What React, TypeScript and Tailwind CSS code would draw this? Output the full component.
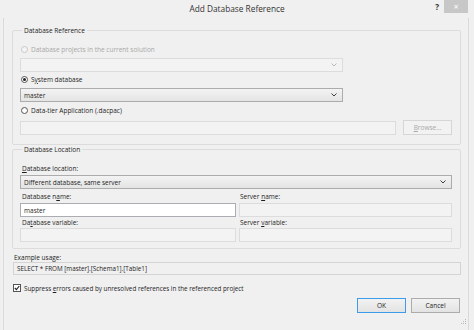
import type { ReactNode } from "react";

const font = { fontFamily: '"Open Sans", "Noto Sans", sans-serif' };

function Chevron({ disabled }: { disabled?: boolean }) {
  return (
    <svg width="6" height="4" viewBox="0 0 6 4" className="shrink-0">
      <path d="M0.5 0.5 L3 3 L5.5 0.5" fill="none" stroke={disabled ? "#b8b8b8" : "#404040"} strokeWidth="1" />
    </svg>
  );
}

function Combo({ text, width, disabled }: { text?: string; width: string; disabled?: boolean }) {
  return (
    <div
      className={`flex h-[14px] items-center justify-between border pl-[3px] pr-[5px] ${width} ${
        disabled
          ? "border-[#dcdcdc] bg-[#f3f3f3]"
          : "border-[#acacac] bg-gradient-to-b from-[#f3f3f3] to-[#e4e4e4]"
      }`}
    >
      <span className="text-[6.5px] leading-[9px] text-[#1e1e1e]">{text}</span>
      <Chevron disabled={disabled} />
    </div>
  );
}

function Field({ text, width, white }: { text?: string; width: string; white?: boolean }) {
  return (
    <div
      className={`flex h-[14px] items-center border pl-[3px] ${width} ${
        white ? "border-[#abadb3] bg-white" : "border-[#dcdcdc] bg-[#f3f3f3]"
      }`}
    >
      <span className="text-[6.5px] leading-[9px] text-[#1e1e1e]">{text}</span>
    </div>
  );
}

function Radio({ checked, disabled, children }: { checked?: boolean; disabled?: boolean; children: ReactNode }) {
  return (
    <div className="ml-[1px] flex h-[9px] items-center gap-[3px]">
      <span
        className={`flex h-[7px] w-[7px] items-center justify-center rounded-full border ${
          disabled ? "border-[#c8c8c8] bg-[#f4f4f4]" : "border-[#555] bg-white"
        }`}
      >
        {checked && <span className="h-[3px] w-[3px] rounded-full bg-[#222]" />}
      </span>
      <span className={`text-[6.5px] leading-[9px] ${disabled ? "text-[#a8a8a8]" : "text-[#1e1e1e]"}`}>
        {children}
      </span>
    </div>
  );
}

function Label({ children, className = "" }: { children: ReactNode; className?: string }) {
  return <div className={`h-[9px] text-[6.5px] leading-[9px] text-[#1e1e1e] ${className}`}>{children}</div>;
}

function Group({ title, children, className = "" }: { title: string; children: ReactNode; className?: string }) {
  return (
    <fieldset className={`w-[449px] rounded-[2px] border border-[#dcdcdc] pl-[7px] pr-[8px] ${className}`}>
      <legend className="ml-[2px] px-[2px] text-[6.5px] leading-[9px] text-[#1e1e1e]">{title}</legend>
      {children}
    </fieldset>
  );
}

function Button({ children, primary, disabled }: { children: ReactNode; primary?: boolean; disabled?: boolean }) {
  return (
    <div
      className={`flex h-[15px] w-[49px] items-center justify-center border text-[6.5px] leading-[9px] ${
        disabled
          ? "border-[#d6d6d6] bg-[#f2f2f2] text-[#a8a8a8]"
          : primary
          ? "border-[#3c9bea] bg-gradient-to-b from-[#f2f2f2] to-[#e3e3e3] text-[#1e1e1e]"
          : "border-[#acacac] bg-gradient-to-b from-[#f2f2f2] to-[#e3e3e3] text-[#1e1e1e]"
      }`}
    >
      {children}
    </div>
  );
}

export default function App() {
  return (
    <div className="flex h-[330px] w-[474px] flex-col bg-[#f0f0f0]" style={font}>
      {/* Title bar */}
      <div className="grid h-[18px] grid-cols-[1fr_auto_1fr] items-start">
        <div />
        <div className="pt-[3px] text-[8.3px] leading-[12px] text-[#333]">Add Database Reference</div>
        <div className="flex justify-end pr-[6px]">
          <span className="mr-[5px] mt-[2px] text-[8px] font-bold leading-[10px] text-[#333]">?</span>
          <span className="flex h-[13px] w-[24px] items-center justify-center bg-[#c7c7c7] text-[9px] leading-[9px] text-white">
            ×
          </span>
        </div>
      </div>

      {/* Body */}
      <div className="ml-[3px] flex w-[466px] flex-1 flex-col border-x border-[#dadada] pl-[8px] pt-[8px]">
        <Group title="Database Reference" className="pb-[9px]">
          <div className="mt-[10px]">
            <Radio disabled>Database projects in the current solution</Radio>
          </div>
          <div className="mt-[4px]">
            <Combo width="w-[323px]" disabled />
          </div>
          <div className="mt-[3px]">
            <Radio checked>
              S<span className="underline">y</span>stem database
            </Radio>
          </div>
          <div className="mt-[4px]">
            <Combo width="w-[323px]" text="master" />
          </div>
          <div className="mt-[4px]">
            <Radio>Data-tier Application (.dacpac)</Radio>
          </div>
          <div className="mt-[5px] flex items-center gap-[7px]">
            <Field width="w-[376px]" />
            <Button disabled>
              <span>
                <span className="underline">B</span>rowse...
              </span>
            </Button>
          </div>
        </Group>

        <Group title="Database Location" className="pb-[6px]">
          <Label className="ml-[2px] mt-[10px]">
            <span className="underline">D</span>atabase location:
          </Label>
          <div className="mt-[2px]">
            <Combo width="w-[432px]" text="Different database, same server" />
          </div>
          <div className="mt-[3px] grid grid-cols-[216px_213px] gap-x-[3px]">
            <Label className="ml-[2px]">
              Database n<span className="underline">a</span>me:
            </Label>
            <Label className="ml-[1px]">
              Server <span className="underline">n</span>ame:
            </Label>
            <div className="mt-[2px]">
              <Field width="w-[216px]" text="master" white />
            </div>
            <div className="mt-[2px]">
              <Field width="w-[213px]" />
            </div>
            <Label className="ml-[2px] mt-[1px]">
              Da<span className="underline">t</span>abase variable:
            </Label>
            <Label className="ml-[1px] mt-[1px]">
              Server <span className="underline">v</span>ariable:
            </Label>
            <div className="mt-[1px]">
              <Field width="w-[216px]" />
            </div>
            <div className="mt-[1px]">
              <Field width="w-[213px]" />
            </div>
          </div>
        </Group>

        <Label className="ml-[2px] mt-[4px]">Example usage:</Label>
        <div className="ml-[1px] flex h-[13px] w-[448px] items-center border border-[#d4d4d4] bg-[#f0f0f0] pl-[3px]">
          <span className="text-[6.3px] leading-[9px] text-[#1e1e1e]">SELECT * FROM [master].[Schema1].[Table1]</span>
        </div>

        <div className="ml-[1px] mt-[8px] flex h-[10px] items-center gap-[3px]">
          <span className="flex h-[8px] w-[8px] items-center justify-center border border-[#555] bg-white">
            <svg width="6" height="6" viewBox="0 0 6 6">
              <path d="M0.8 3 L2.4 4.6 L5.3 1" fill="none" stroke="#222" strokeWidth="1.1" />
            </svg>
          </span>
          <span className="text-[6.3px] leading-[9px] text-[#1e1e1e]">
            Suppress <span className="underline">e</span>rrors caused by unresolved references in the referenced project
          </span>
        </div>

        <div className="mt-[5px] flex justify-end gap-[5px] pr-[8px]">
          <Button primary>OK</Button>
          <Button>Cancel</Button>
        </div>

        <div className="mt-auto flex justify-end pb-[6px] pr-[2px]">
          <svg width="5" height="5" viewBox="0 0 5 5">
            <rect x="4" y="0" width="1" height="1" fill="#b8b8b8" />
            <rect x="2" y="2" width="1" height="1" fill="#b8b8b8" />
            <rect x="4" y="2" width="1" height="1" fill="#b8b8b8" />
            <rect x="0" y="4" width="1" height="1" fill="#b8b8b8" />
            <rect x="2" y="4" width="1" height="1" fill="#b8b8b8" />
            <rect x="4" y="4" width="1" height="1" fill="#b8b8b8" />
          </svg>
        </div>
      </div>
    </div>
  );
}
